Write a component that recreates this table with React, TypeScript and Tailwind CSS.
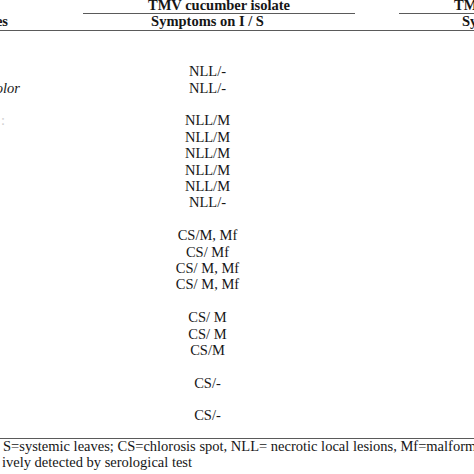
import React from "react";

type Row = { sp?: string; faint?: boolean; sym?: string };

const rows: Row[] = [
  {},
  {},
  { sym: "NLL/-" },
  { sp: "Amaranthus tricolor", sym: "NLL/-" },
  {},
  { sp: ":", faint: true, sym: "NLL/M" },
  { sym: "NLL/M" },
  { sym: "NLL/M" },
  { sym: "NLL/M" },
  { sym: "NLL/M" },
  { sym: "NLL/-" },
  {},
  { sym: "CS/M, Mf" },
  { sym: "CS/ Mf" },
  { sym: "CS/ M, Mf" },
  { sym: "CS/ M, Mf" },
  {},
  { sym: "CS/ M" },
  { sym: "CS/ M" },
  { sym: "CS/M" },
  {},
  { sym: "CS/-" },
  {},
  { sym: "CS/-" },
];

export default function App() {
  return (
    <div
      className="w-[474px] h-[474px] overflow-hidden bg-white text-[#161616] text-[14.5px]"
      style={{ fontFamily: '"Liberation Serif", "Times New Roman", serif' }}
    >
      <div className="w-[760px] flex flex-col">
        {/* header row 1 */}
        <div className="flex mt-[-3px] font-bold leading-[16px] whitespace-nowrap">
          <div className="w-[83px] shrink-0" />
          <div className="w-[272px] shrink-0 text-center border-b-[1.5px] border-[#5a5a5a]">
            TMV cucumber isolate
          </div>
          <div className="w-[44px] shrink-0" />
          <div className="w-[272px] shrink-0 pl-[55px] border-b-[1.5px] border-[#5a5a5a]">
            TMV tomato isolate
          </div>
        </div>
        {/* header row 2 */}
        <div className="flex font-bold leading-[15.5px] whitespace-nowrap border-b-[1.5px] border-[#5a5a5a]">
          <div className="w-[20px] shrink-0 flex justify-end pr-[12px]">
            <span>Plant species</span>
          </div>
          <div className="w-[375px] shrink-0 text-center">Symptoms on I / S</div>
          <div className="shrink-0 pl-[67px]">Symptoms on I / S</div>
        </div>
        {/* data rows */}
        <div className="flex flex-col">
          {rows.map((r, i) => (
            <div key={i} className="flex h-[16.4px] leading-[16.4px] whitespace-nowrap">
              <div className="w-[20px] shrink-0 flex justify-end">
                {r.sp ? (
                  <span className={r.faint ? "text-[#cfcfcf] pr-[15px]" : "italic"}>{r.sp}</span>
                ) : null}
              </div>
              <div className="w-[375px] shrink-0 text-center">{r.sym ?? ""}</div>
            </div>
          ))}
          <div className="h-[14.5px]" />
        </div>
        {/* footer */}
        <div className="border-t-[1.5px] border-[#5a5a5a] leading-[15.5px] whitespace-nowrap">
          <div className="pl-[3px]">
            S=systemic leaves; CS=chlorosis spot, NLL= necrotic local lesions, Mf=malformation
          </div>
          <div className="pl-[2px]">ively detected by serological test</div>
        </div>
      </div>
    </div>
  );
}
